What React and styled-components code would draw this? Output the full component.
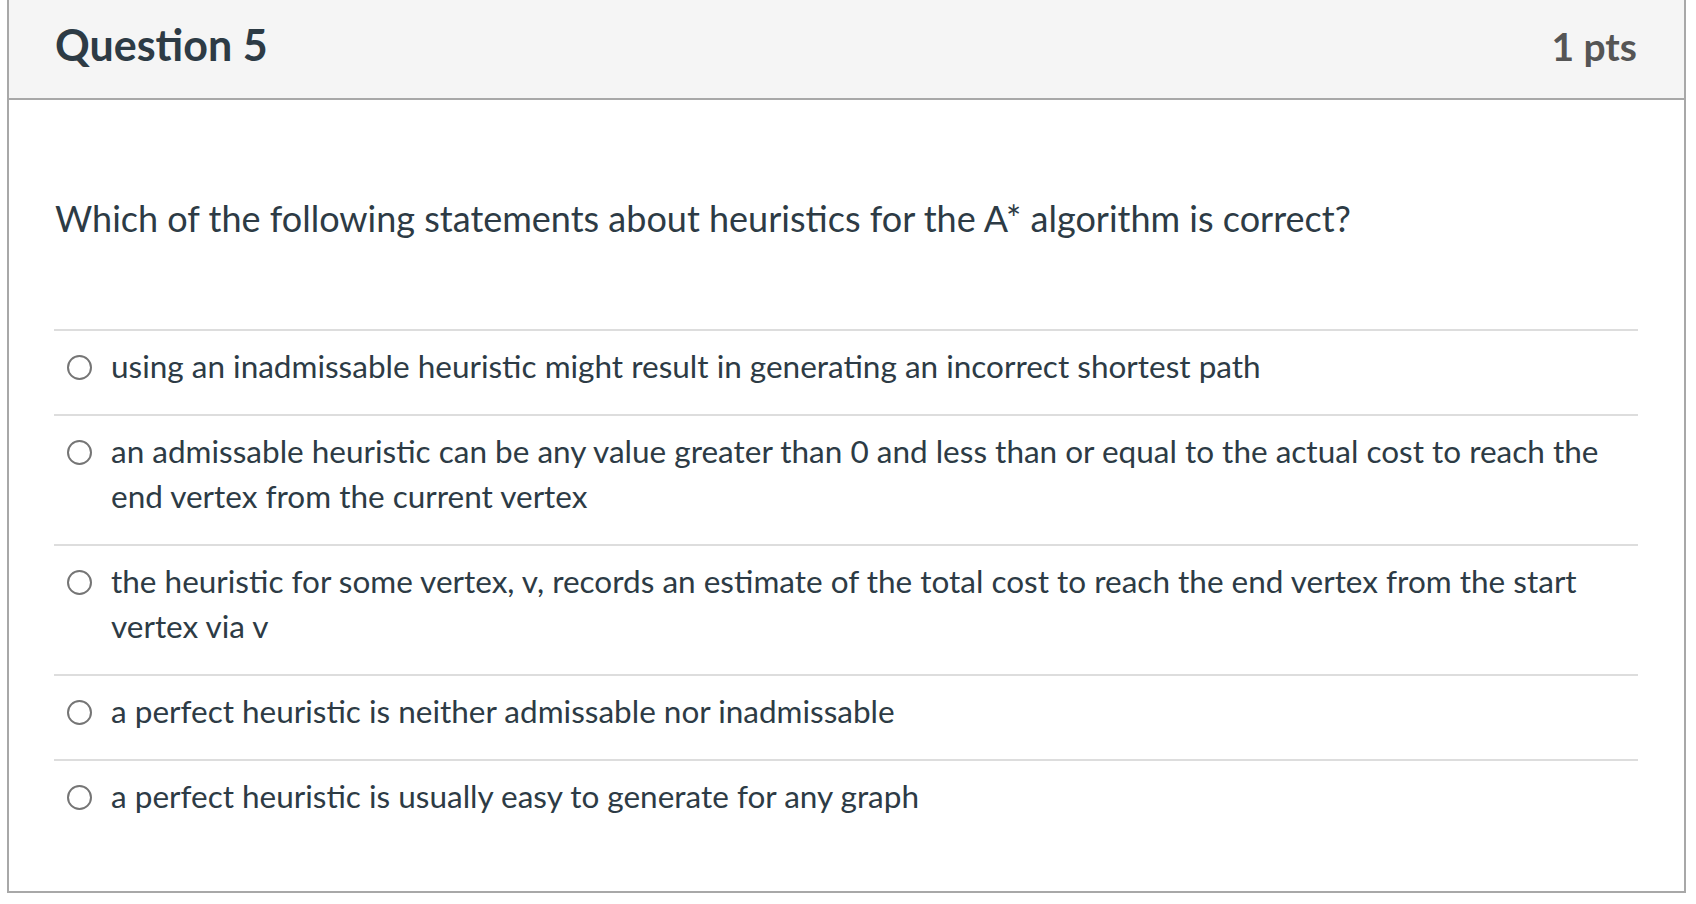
import React from "react";
import styled, { createGlobalStyle } from "styled-components";

const Global = createGlobalStyle`
  html, body { margin: 0; padding: 0; background: #ffffff; }
  body { font-family: Lato, "Noto Sans", "Liberation Sans", sans-serif; color: #2d3b45; }
`;

const Card = styled.section`
  box-sizing: border-box;
  width: 1679px;
  margin: -2px 0 0 7px;
  border: 2px solid #a8a8a8;
  background: #ffffff;
`;

const Header = styled.header`
  display: flex;
  align-items: baseline;
  justify-content: space-between;
  padding: 19px 47px 27px 46px;
  background: #f5f5f5;
  border-bottom: 2px solid #a8a8a8;
`;

const Title = styled.h2`
  margin: 0;
  font-size: 43px;
  line-height: 1.2;
  font-weight: 700;
  color: #2d3b45;
`;

const Points = styled.div`
  font-size: 39px;
  line-height: 1.2;
  font-weight: 700;
  color: #555555;
`;

const Body = styled.div`
  padding: 0 46px 47px 45px;
`;

const QuestionText = styled.p`
  margin: 0;
  padding: 95px 0 88px 1px;
  font-size: 36px;
  line-height: 46px;
  color: #2d3b45;
`;

const Answers = styled.ul`
  list-style: none;
  margin: 0;
  padding: 0;
`;

const Answer = styled.li`
  display: flex;
  align-items: flex-start;
  gap: 19px;
  padding: 13px 0 25px 13px;
  border-top: 2px solid #dddddd;
`;

const Radio = styled.span`
  flex: none;
  box-sizing: border-box;
  width: 25px;
  height: 25px;
  margin-top: 11px;
  border: 2.5px solid #757575;
  border-radius: 50%;
  background: #ffffff;
`;

const AnswerText = styled.span`
  font-size: 31.5px;
  line-height: 45px;
  color: #2d3b45;
`;

const answers = [
  "using an inadmissable heuristic might result in generating an incorrect shortest path",
  "an admissable heuristic can be any value greater than 0 and less than or equal to the actual cost to reach the end vertex from the current vertex",
  "the heuristic for some vertex, v, records an estimate of the total cost to reach the end vertex from the start vertex via v",
  "a perfect heuristic is neither admissable nor inadmissable",
  "a perfect heuristic is usually easy to generate for any graph",
];

export default function App() {
  return (
    <>
      <Global />
      <Card>
        <Header>
          <Title>Question 5</Title>
          <Points>1 pts</Points>
        </Header>
        <Body>
          <QuestionText>
            Which of the following statements about heuristics for the A* algorithm is correct?
          </QuestionText>
          <Answers>
            {answers.map((a) => (
              <Answer key={a}>
                <Radio />
                <AnswerText>{a}</AnswerText>
              </Answer>
            ))}
          </Answers>
        </Body>
      </Card>
    </>
  );
}
